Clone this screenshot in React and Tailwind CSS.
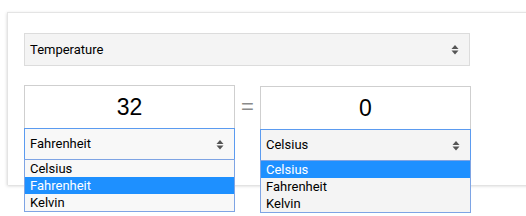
import React from 'react';

const Arrows = () => (
  <svg width="8" height="11" viewBox="0 0 8 11" className="shrink-0">
    <path d="M0.5 5 L4 1 L7.5 5 Z" fill="#555" />
    <path d="M0.5 6.5 L7.5 6.5 L4 10.5 Z" fill="#555" />
  </svg>
);

const units = ['Celsius', 'Fahrenheit', 'Kelvin'];

const Converter = ({ value, unit, listBg, selectBg, shift = '' }) => (
  <div className={`relative w-[211px] ${shift}`}>
    <div className="h-[43px] border border-b-0 border-[#cfcfcf] bg-white flex items-center justify-center">
      <span className="text-[23px] text-black leading-none" style={{ fontFamily: '"Liberation Sans", Arial, sans-serif' }}>
        {value}
      </span>
    </div>
    <div className={`relative h-[32px] border border-[#5b9bf0] ${selectBg} flex items-center justify-between pl-[5px] pr-[10px]`}>
      <span className="text-[13px] text-black">{unit}</span>
      <Arrows />
      <div className={`absolute left-[-1px] right-[-1px] top-full border border-[#7ea4e4] ${listBg} z-10`}>
        {units.map((u) => (
          <div
            key={u}
            className={`h-[17px] flex items-center pl-[5px] text-[13px] ${u === unit ? 'bg-[#1e90ff] text-white' : 'text-black'}`}
          >
            {u}
          </div>
        ))}
      </div>
    </div>
  </div>
);

export default function App() {
  return (
    <div className="w-[526px] h-[216px] bg-white overflow-hidden pt-[12px] pl-[7px]" style={{ fontFamily: 'Roboto, "Noto Sans", sans-serif' }}>
      <div className="w-[540px] border-l border-t border-[#e4e4e4] bg-white shadow-[0_1px_3px_rgba(0,0,0,0.18)] pl-[16px] pt-[20px] pb-[24px]">
        <div className="w-[446px] h-[33px] border border-[#dcdcdc] bg-[#f4f4f4] flex items-center justify-between pl-[5px] pr-[10px]">
          <span className="text-[13px] text-black">Temperature</span>
          <Arrows />
        </div>
        <div className="mt-[19px] flex items-start">
          <Converter value="32" unit="Fahrenheit" listBg="bg-[#f8f8f8]" selectBg="bg-[#f8f8f8]" />
          <div className="w-[25px] h-[43px] flex items-center justify-center">
            <span className="text-[22px] text-[#8a8a8a] leading-none" style={{ fontFamily: '"Liberation Sans", Arial, sans-serif' }}>=</span>
          </div>
          <Converter value="0" unit="Celsius" listBg="bg-[#f4f4f4]" selectBg="bg-[#f4f4f4]" shift="mt-[1px]" />
        </div>
      </div>
    </div>
  );
}
